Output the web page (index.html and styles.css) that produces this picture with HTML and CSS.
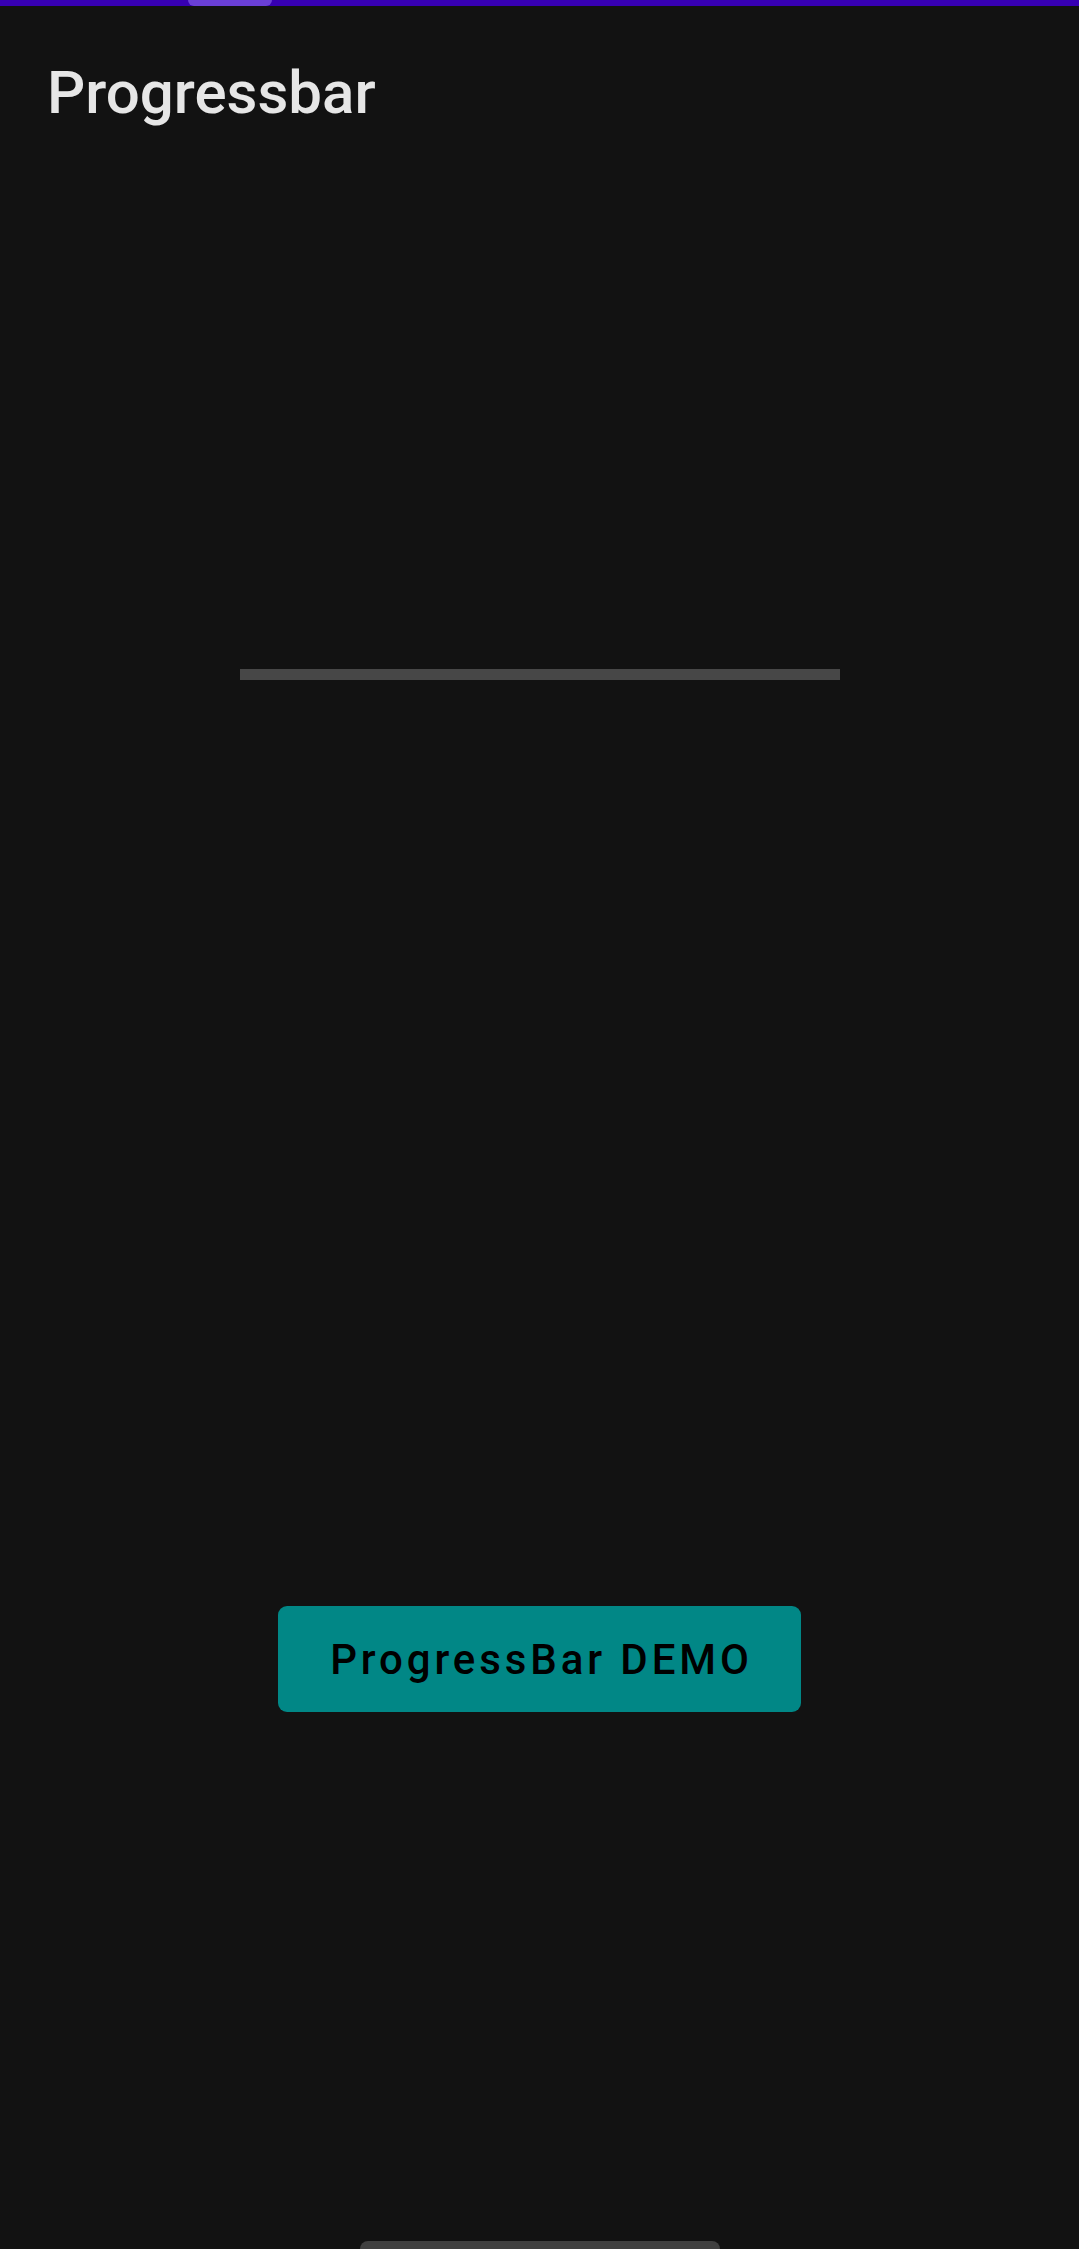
FILE: index.html
```html
<!DOCTYPE html>
<html>
<head>
<meta charset="utf-8">
<link rel="stylesheet" href="styles.css">
</head>
<body>
<div class="screen">
  <div class="statusbar"><div class="pill"></div></div>
  <header class="appbar">Progressbar</header>
  <main class="content">
    <div class="progress"></div>
    <button class="btn">ProgressBar DEMO</button>
  </main>
  <div class="navbar"><div class="handle"></div></div>
</div>
</body>
</html>
```
FILE: styles.css
```css
html, body {
  margin: 0;
  padding: 0;
  background: #121212;
}
.screen {
  width: 1079px;
  height: 2249px;
  background: #121212;
  display: flex;
  flex-direction: column;
  font-family: Roboto, "Noto Sans", sans-serif;
  overflow: hidden;
}
.statusbar {
  height: 6px;
  background: #3700b3;
  padding-left: 188px;
  flex: none;
}
.pill {
  width: 84px;
  height: 6px;
  background: #6a3fd6;
  border-radius: 0 0 30px 30px;
}
.appbar {
  flex: none;
  height: 140px;
  box-sizing: border-box;
  padding: 51px 0 0 47px;
  font-size: 60px;
  font-weight: 500;
  color: #e6e6e6;
  line-height: 72px;
}
.content {
  flex: 1;
  display: flex;
  flex-direction: column;
  align-items: center;
}
.progress {
  margin-top: 523px;
  width: 600px;
  height: 11px;
  background: #474747;
}
.btn {
  margin-top: 926px;
  width: 523px;
  height: 106px;
  border: none;
  border-radius: 9px;
  background: #018786;
  color: #000;
  font-family: Roboto, "Noto Sans", sans-serif;
  font-size: 42px;
  font-weight: 500;
  letter-spacing: 3.9px;
  padding: 0 0 0 3.9px;
  display: flex;
  align-items: center;
  justify-content: center;
}
.navbar {
  flex: none;
  height: 8px;
  display: flex;
  justify-content: center;
}
.handle {
  width: 360px;
  height: 16px;
  background: #404040;
  border-radius: 8px;
}
```
